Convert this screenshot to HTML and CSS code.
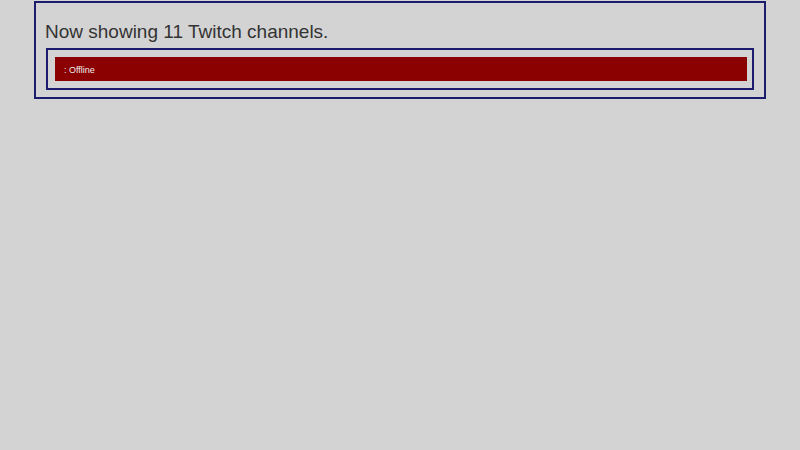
FILE: index.html
```html
<!DOCTYPE html>
<html lang="en">
<head>
    <meta charset="UTF-8">
    <meta name="viewport" content="width=device-width, initial-scale=1.0">
    <title>Twitch Streamers</title>
    <link rel="stylesheet" href="styles.css">
</head>
<body>
    <div class="wrapper">
        <h3 class="title">Now showing 11 Twitch channels.</h3>
        <div class="channels">
            <div class="channel offline">: Offline</div>
        </div>
    </div>
</body>
</html>
```

FILE: styles.css
```css
body {
    margin: 0;
    background: #d3d3d3;
    font-family: "Liberation Sans", Arial, sans-serif;
    color: #333;
}
.wrapper {
    margin: 1px 34px 0;
    border: 2px solid #1c1c6e;
    padding: 17px 10px 7px 10px;
}
.title {
    font-size: 19px;
    font-weight: normal;
    margin: 0 0 5px -1px;
    line-height: 23px;
}
.channels {
    border: 2px solid #1c1c6e;
    padding: 7px 5px 7px 7px;
}
.channel {
    height: 23px;
    padding-top: 1px;
    line-height: 24px;
    padding-left: 9px;
    font-size: 9px;
    color: #eee;
}
.offline {
    background: #8b0000;
}
```
